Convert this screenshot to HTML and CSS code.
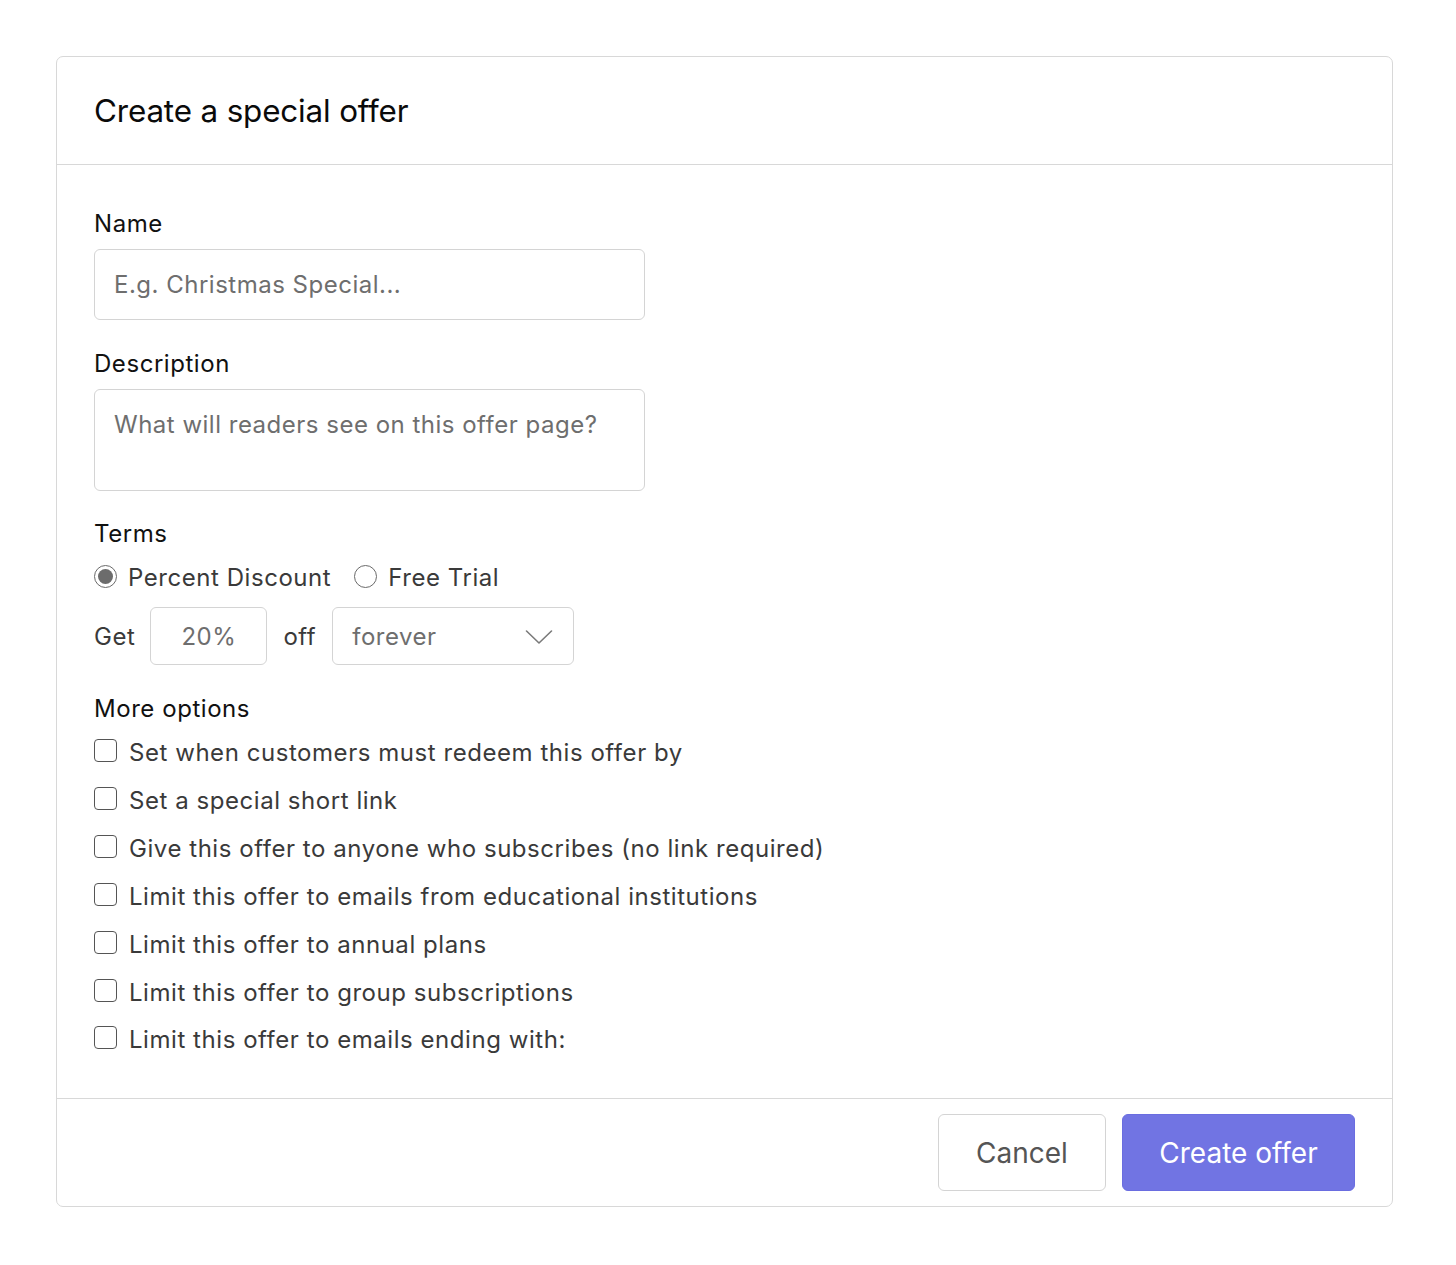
FILE: index.html
```html
<!DOCTYPE html>
<html>
<head>
<meta charset="utf-8">
<link rel="stylesheet" href="styles.css">
</head>
<body>
<div class="card">
  <div class="card-header"><h1 class="title">Create a special offer</h1></div>
  <div class="card-body">
    <div class="label">Name</div>
    <div class="input name-input"><span class="ph">E.g. Christmas Special...</span></div>
    <div class="label gap-top">Description</div>
    <div class="input textarea"><span class="ph">What will readers see on this offer page?</span></div>
    <div class="label gap-top terms">Terms</div>
    <div class="radio-row">
      <span class="radio-item"><span class="radio checked"></span><span class="opt">Percent Discount</span></span>
      <span class="radio-item"><span class="radio"></span><span class="opt">Free Trial</span></span>
    </div>
    <div class="get-row">
      <span class="opt">Get</span>
      <span class="input pct"><span class="ph">20%</span></span>
      <span class="opt">off</span>
      <span class="input select"><span class="ph">forever</span>
        <svg class="chev" width="28" height="16" viewBox="0 0 28 16"><path d="M1.5 2 L14 14 L26.5 2" fill="none" stroke="#7a7a7a" stroke-width="1.6" stroke-linejoin="round" stroke-linecap="round"/></svg>
      </span>
    </div>
    <div class="label gap-top2">More options</div>
    <div class="checks">
      <div class="check-row"><span class="box"></span><span class="opt">Set when customers must redeem this offer by</span></div>
      <div class="check-row"><span class="box"></span><span class="opt">Set a special short link</span></div>
      <div class="check-row"><span class="box"></span><span class="opt">Give this offer to anyone who subscribes (no link required)</span></div>
      <div class="check-row"><span class="box"></span><span class="opt">Limit this offer to emails from educational institutions</span></div>
      <div class="check-row"><span class="box"></span><span class="opt">Limit this offer to annual plans</span></div>
      <div class="check-row"><span class="box"></span><span class="opt">Limit this offer to group subscriptions</span></div>
      <div class="check-row"><span class="box"></span><span class="opt">Limit this offer to emails ending with:</span></div>
    </div>
  </div>
  <div class="card-footer">
    <button class="btn btn-cancel">Cancel</button>
    <button class="btn btn-primary">Create offer</button>
  </div>
</div>
</body>
</html>
```
FILE: styles.css
```css
* { box-sizing: border-box; }
body {
  margin: 0;
  padding: 56px 0 0 56px;
  background: #fff;
  font-family: Inter, "Noto Sans", "Liberation Sans", sans-serif;
  color: #111;
}
.card {
  width: 1337px;
  height: 1151px;
  border: 1.5px solid #d8d8d8;
  border-radius: 7px;
  display: flex;
  flex-direction: column;
}
.card-header {
  height: 108px;
  border-bottom: 1.5px solid #d8d8d8;
  display: flex;
  align-items: center;
  padding: 0 37px;
}
.title {
  margin: 0;
  font-size: 31.4px;
  font-weight: 400;
  color: #0a0a0a;
  letter-spacing: -0.15px;
}
.card-body {
  flex: 1;
  padding: 44px 37px 0;
}
.label {
  font-size: 24px;
  line-height: 30px;
  color: #111;
  margin-bottom: 10px;
  letter-spacing: 0.55px;
}
.gap-top { margin-top: 29px; }
.label.terms { margin-top: 28px; margin-bottom: 13px; }
.gap-top2 { margin-top: 29px; margin-bottom: 5px; }
.input {
  border: 1.5px solid #d4d4d4;
  border-radius: 6px;
  display: flex;
  align-items: center;
}
.ph {
  font-size: 24px;
  color: #6e6e6e;
  letter-spacing: 0.5px;
}
.name-input {
  width: 551px;
  height: 71px;
  padding-left: 19px;
}
.textarea {
  width: 551px;
  height: 102px;
  padding: 20px 0 0 19px;
  align-items: flex-start;
}
.radio-row {
  display: flex;
  align-items: center;
  gap: 23px;
  height: 30px;
}
.radio-item {
  display: flex;
  align-items: center;
  gap: 11px;
}
.radio {
  width: 23px;
  height: 23px;
  border: 1.5px solid #6a6a6a;
  border-radius: 50%;
  display: flex;
  align-items: center;
  justify-content: center;
  margin-top: -2px;
}
.radio.checked::after {
  content: "";
  width: 15px;
  height: 15px;
  border-radius: 50%;
  background: #6c6c6c;
}
.opt {
  font-size: 24px;
  color: #3a3a3a;
  white-space: nowrap;
  letter-spacing: 0.55px;
}
.get-row {
  display: flex;
  align-items: center;
  margin-top: 15px;
  height: 58px;
}
.get-row > .opt:first-child { margin-right: 15px; }
.pct {
  width: 117px;
  height: 58px;
  justify-content: center;
  margin-right: 16px;
}
.get-row > .opt:nth-child(3) { margin-right: 16px; }
.select {
  width: 242px;
  height: 58px;
  padding: 0 20px 0 19px;
  justify-content: space-between;
}
.chev { display: block; margin-top: 1px; }
.checks { display: flex; flex-direction: column; }
.check-row {
  height: 47.83px;
  display: flex;
  align-items: center;
  gap: 12px;
}
.box {
  width: 23px;
  height: 23px;
  border: 1.6px solid #555;
  border-radius: 4px;
  margin-top: -4px;
  flex: none;
}
.card-footer {
  border-top: 1.5px solid #d8d8d8;
  height: 108px;
  display: flex;
  justify-content: flex-end;
  align-items: center;
  gap: 16px;
  padding: 0 37px;
}
.btn {
  height: 77px;
  border-radius: 6px;
  font-family: inherit;
  font-size: 28px;
  cursor: pointer;
}
.btn-cancel {
  width: 168px;
  background: #fff;
  border: 1.5px solid #d4d4d4;
  color: #555;
}
.btn-primary {
  width: 233px;
  background: #7174e3;
  border: 1px solid #6a6de0;
  color: #fff;
}
```
